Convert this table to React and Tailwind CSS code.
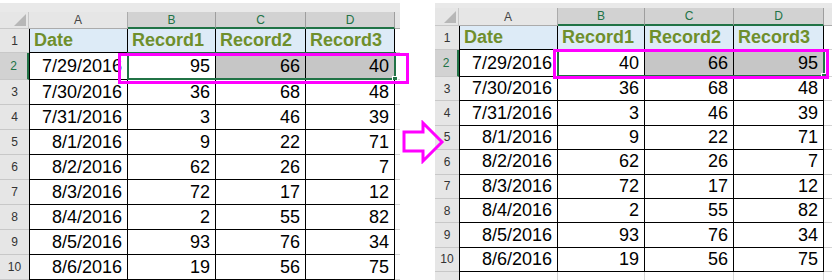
import React from "react";

const leftData = [
  ["7/29/2016", "95", "66", "40"],
  ["7/30/2016", "36", "68", "48"],
  ["7/31/2016", "3", "46", "39"],
  ["8/1/2016", "9", "22", "71"],
  ["8/2/2016", "62", "26", "7"],
  ["8/3/2016", "72", "17", "12"],
  ["8/4/2016", "2", "55", "82"],
  ["8/5/2016", "93", "76", "34"],
  ["8/6/2016", "19", "56", "75"],
];
const rightData = leftData.map((r, i) => (i === 0 ? ["7/29/2016", "40", "66", "95"] : r));

const LEFT = {
  width: "w-[400px]",
  cols: ["w-[29px]", "w-[99px]", "w-[88px]", "w-[90px]", "w-[89px]", "w-[5px]"],
  strip: "h-[9px]",
  hdr: "h-[17px]",
  r1: "h-[24px]",
  r2: "h-[27px]",
  rn: "h-[25px]",
  sel: "left-[127px] w-[269px]",
};
const RIGHT = {
  width: "w-[397px]",
  cols: ["w-[24px]", "w-[99px]", "w-[87px]", "w-[89px]", "w-[90px]", "w-[8px]"],
  strip: "h-[5px]",
  hdr: "h-[18px]",
  r1: "h-[24px]",
  r2: "h-[27px]",
  rn: "h-[24.4px]",
  sel: "left-[122px] w-[268px]",
};

function Sheet({ k, data, extraRow }) {
  const [rh, a, b, c, d, e] = k.cols;
  const dataCols = [a, b, c, d];
  return (
    <div className={`flex flex-col shrink-0 pt-[3px] bg-white overflow-hidden ${k.width}`}>
      <div className={`bg-[#e9e9e9] shrink-0 ${k.strip}`} />
      {/* column headers */}
      <div className={`flex shrink-0 text-[12px] leading-none ${k.hdr}`}>
        <div className={`relative h-full shrink-0 bg-[#e6e6e6] border-r border-b border-[#c8c8c8] ${rh}`}>
          <svg className="absolute right-[2px] bottom-[2px]" width="12" height="12" viewBox="0 0 12 12">
            <polygon points="12,0 12,12 0,12" fill="#b7b7b7" />
          </svg>
        </div>
        <div className={`h-full flex items-center justify-center bg-[#e6e6e6] text-[#444] border-r border-b border-[#ababab] ${a}`}>A</div>
        {[["B", b], ["C", c], ["D", d]].map(([l, w]) => (
          <div key={l} className={`h-full flex items-center justify-center bg-[#d2d2d2] text-[#217346] border-r border-[#9e9e9e] border-b-2 border-b-[#217346] ${w}`}>{l}</div>
        ))}
        <div className={`h-full bg-[#e6e6e6] border-b border-[#ababab] ${e}`} />
      </div>
      {/* row 1 */}
      <div className={`flex shrink-0 ${k.r1}`}>
        <div className={`h-full flex items-center justify-center bg-[#e6e6e6] text-[12px] text-[#333] border-b border-[#c8c8c8] ${rh}`}>1</div>
        {["Date", "Record1", "Record2", "Record3"].map((t, i) => (
          <div key={t} className={`h-full flex items-center pl-[4px] bg-[#ddebf7] font-bold text-[18px] text-[#6f8f2c] border-r border-b border-black ${i === 0 ? "border-l" : ""} ${dataCols[i]}`}>{t}</div>
        ))}
        <div className={`h-full bg-white border-b border-[#d4d4d4] ${e}`} />
      </div>
      {/* data rows */}
      {data.map((r, i) => {
        const sel = i === 0;
        return (
          <div key={i} className={`relative flex shrink-0 ${sel ? k.r2 : k.rn}`}>
            <div
              className={`h-full flex items-center justify-center text-[12px] border-b border-[#c8c8c8] ${rh} ${sel ? "bg-[#d2d2d2] text-[#217346] border-r-2 border-r-[#217346]" : "bg-[#e6e6e6] text-[#333]"}`}
            >
              {i + 2}
            </div>
            {r.map((t, j) => (
              <div
                key={j}
                className={`h-full flex items-center justify-end pr-[5px] text-[18px] text-black border-r border-b border-black ${dataCols[j]} ${j === 0 ? "border-l" : ""} ${sel && j >= 2 ? "bg-[#c6c6c6]" : "bg-white"}`}
              >
                {t}
              </div>
            ))}
            <div className={`h-full bg-white border-b border-[#d4d4d4] ${e}`} />
            {sel && (
              <div className={`absolute top-[-1px] bottom-0 border-2 border-[#217346] ${k.sel}`}>
                <div className="absolute right-[-4px] bottom-[-4px] w-[6px] h-[6px] bg-[#217346] border border-white" />
              </div>
            )}
          </div>
        );
      })}
      {extraRow && (
        <div className="flex shrink-0 h-[10px]">
          <div className={`h-full bg-[#e6e6e6] ${rh}`} />
          {dataCols.map((w, j) => (
            <div key={j} className={`h-full bg-white border-r border-[#d4d4d4] ${w} ${j === 0 ? "border-l border-l-black" : ""}`} />
          ))}
        </div>
      )}
    </div>
  );
}

export default function App() {
  return (
    <div className="relative w-[832px] h-[280px] overflow-hidden bg-white flex font-['Liberation_Sans',Arial,sans-serif]">
      <Sheet k={LEFT} data={leftData} />
      <div className="w-[35px] shrink-0" />
      <Sheet k={RIGHT} data={rightData} extraRow />
      {/* magenta highlight boxes */}
      <div className="absolute left-[118px] top-[53px] w-[291px] h-[31px] border-[3px] border-[#f0f]" />
      <div className="absolute left-[553px] top-[49px] w-[276px] h-[30px] border-[3px] border-[#f0f]" />
      {/* arrow */}
      <svg className="absolute left-[402px] top-[120px]" width="44" height="44" viewBox="0 0 44 44">
        <polygon points="2,12 21,12 21,3 40,22 21,41 21,31 2,31" fill="none" stroke="#f0f" strokeWidth="3" strokeLinejoin="miter" />
      </svg>
    </div>
  );
}
